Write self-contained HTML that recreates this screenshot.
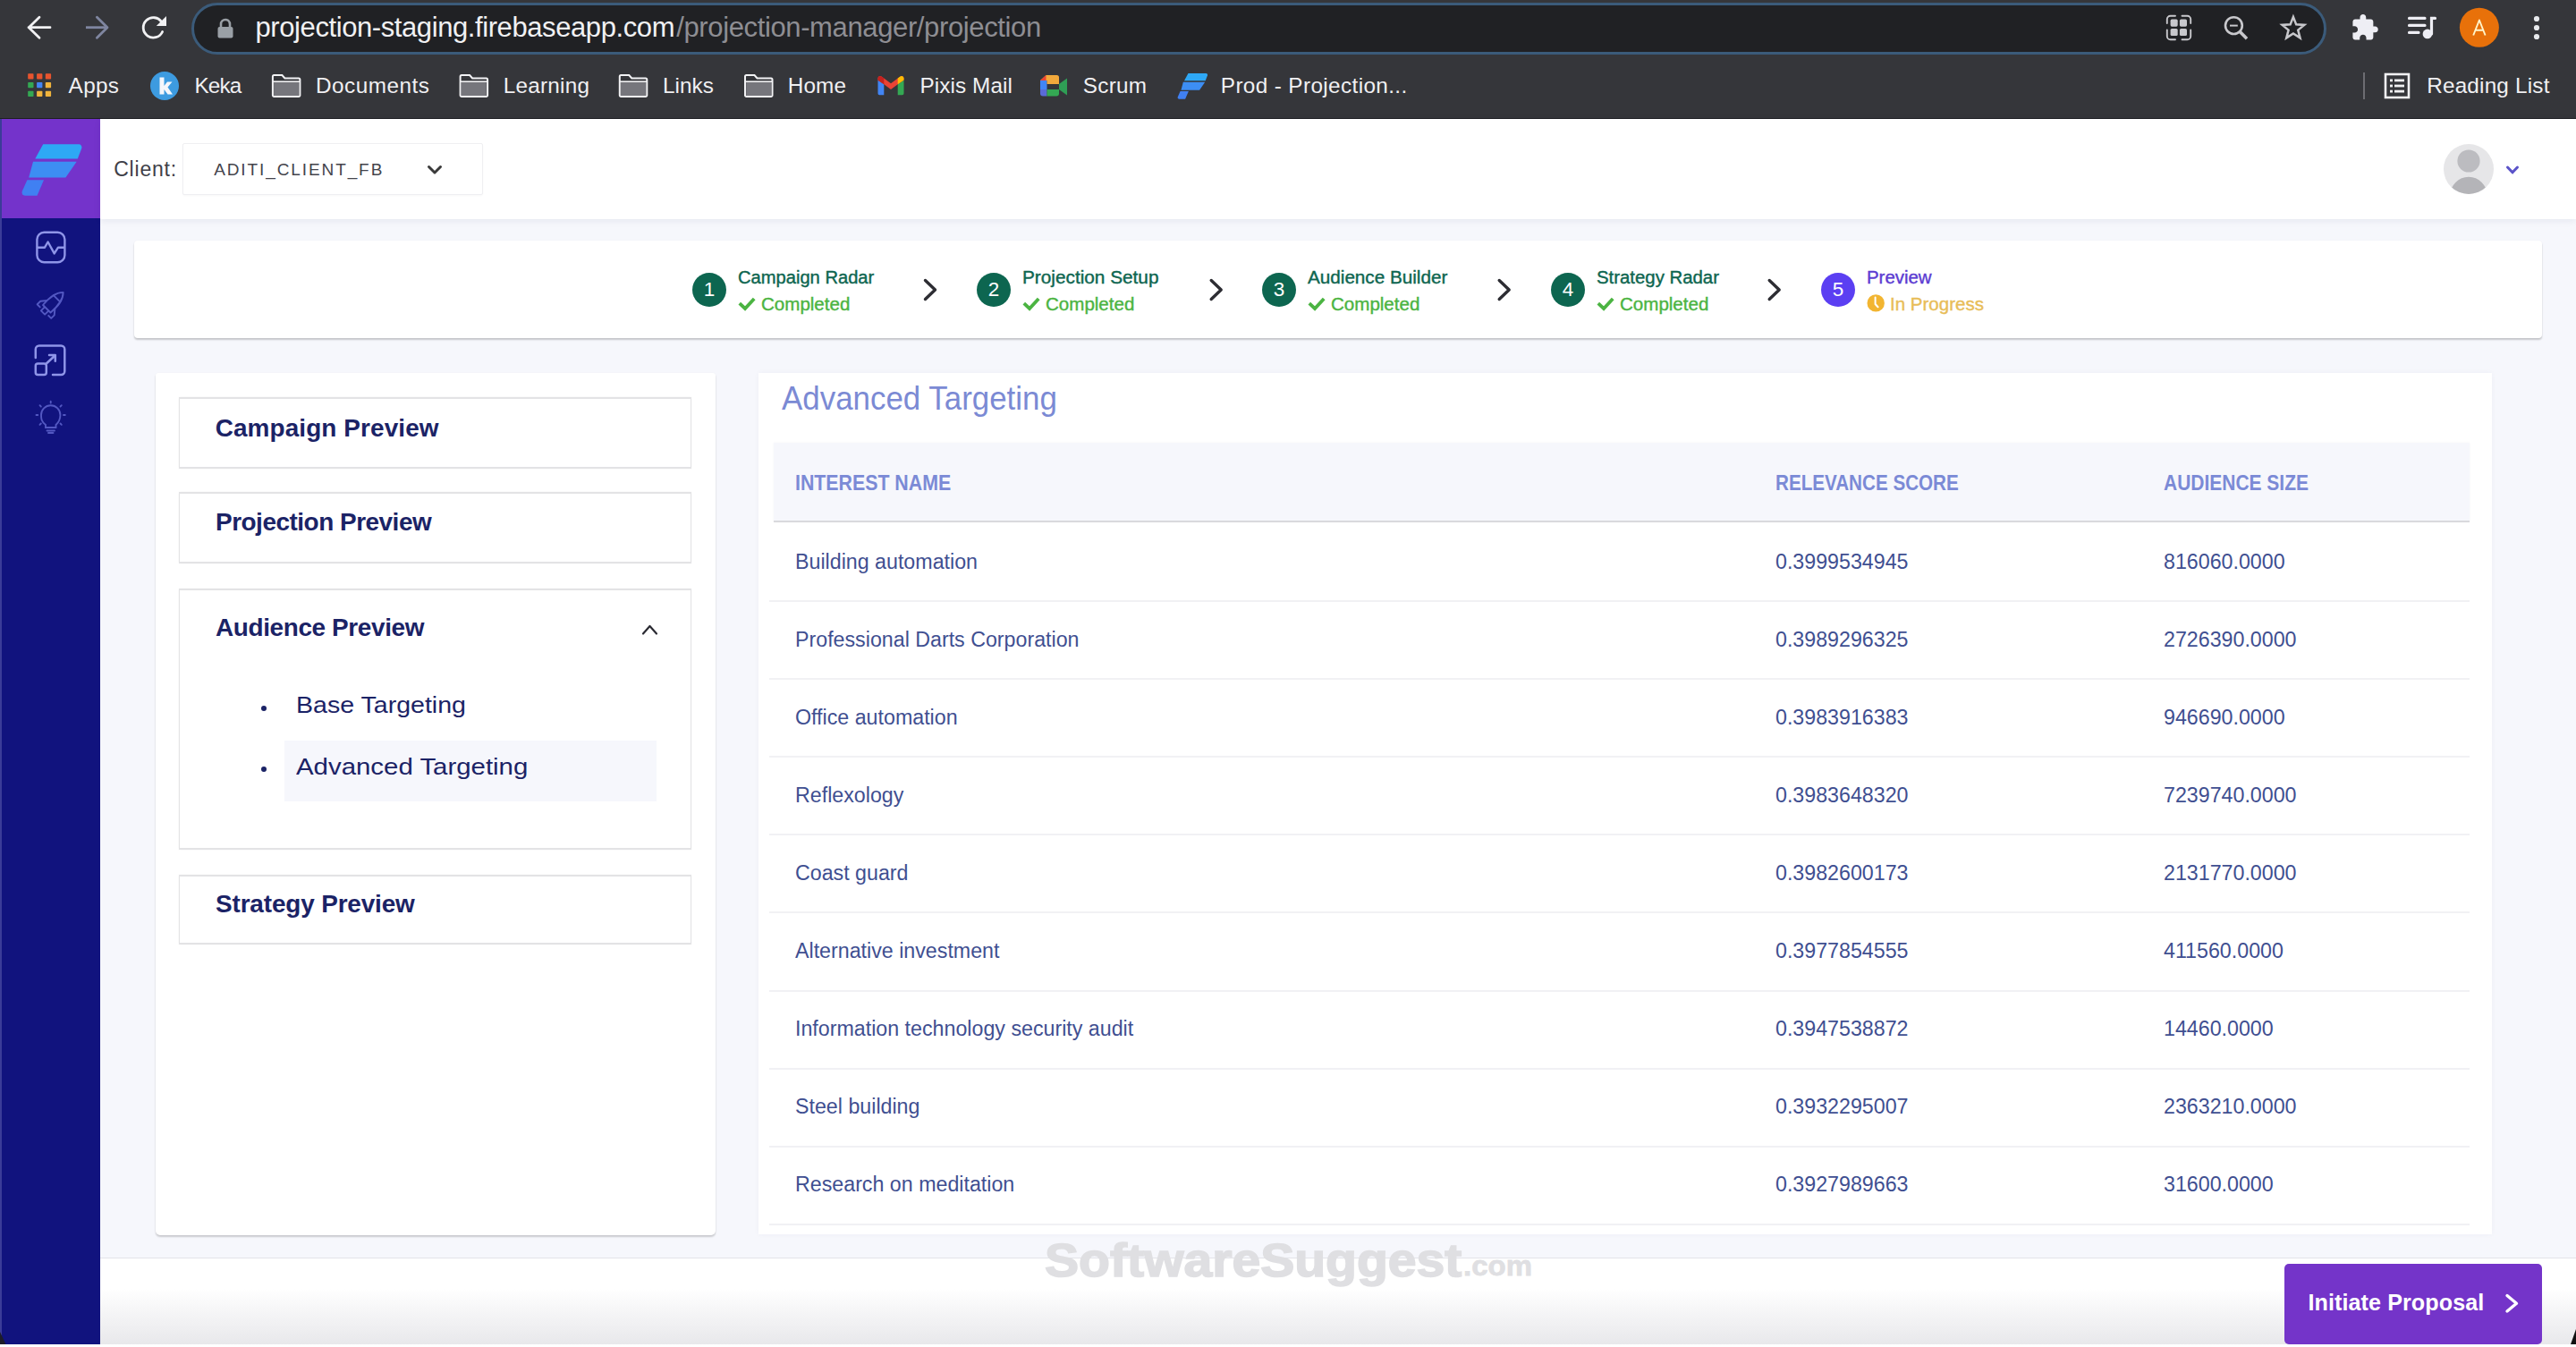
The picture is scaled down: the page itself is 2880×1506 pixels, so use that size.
<!DOCTYPE html>
<html><head><meta charset="utf-8">
<style>
*{box-sizing:border-box;margin:0;padding:0}
html,body{width:2880px;height:1506px;overflow:hidden;background:#f6f7fc;font-family:"Liberation Sans",sans-serif}
.a{position:absolute}
.t{position:absolute;white-space:nowrap;line-height:normal}
.m{-webkit-text-stroke:0.35px currentColor}
svg.o{position:absolute;left:0;top:0}
</style></head><body>
<div class="a" style="left:0;top:0;width:2880px;height:133px;background:#35363a"></div>
<div class="a" style="left:0;top:132px;width:2880px;height:1px;background:#1e1f22"></div>
<div class="a" style="left:214px;top:3px;width:2387px;height:58px;border-radius:29px;background:#202124;border:3px solid #3b5b7a"></div>
<div class="t" style="left:285.5px;top:13.0px;font-size:31.00px;font-weight:400;color:#f1f1f3;letter-spacing:-0.410px;">projection-staging.firebaseapp.com</div>
<div class="t" style="left:756.2px;top:13.0px;font-size:31.00px;font-weight:400;color:#8e8e93;letter-spacing:-0.370px;">/projection-manager/projection</div>
<div class="t" style="left:76.6px;top:81.8px;font-size:24.30px;font-weight:400;color:#f0f0f2;letter-spacing:0.331px;">Apps</div>
<div class="t" style="left:217.5px;top:81.8px;font-size:24.30px;font-weight:400;color:#f0f0f2;letter-spacing:-0.869px;">Keka</div>
<div class="t" style="left:353.0px;top:81.8px;font-size:24.30px;font-weight:400;color:#f0f0f2;letter-spacing:0.512px;">Documents</div>
<div class="t" style="left:562.8px;top:81.8px;font-size:24.30px;font-weight:400;color:#f0f0f2;letter-spacing:0.229px;">Learning</div>
<div class="t" style="left:741.0px;top:81.8px;font-size:24.30px;font-weight:400;color:#f0f0f2;letter-spacing:0.064px;">Links</div>
<div class="t" style="left:880.7px;top:81.8px;font-size:24.30px;font-weight:400;color:#f0f0f2;letter-spacing:0.158px;">Home</div>
<div class="t" style="left:1028.4px;top:81.8px;font-size:24.30px;font-weight:400;color:#f0f0f2;letter-spacing:0.110px;">Pixis Mail</div>
<div class="t" style="left:1210.8px;top:81.8px;font-size:24.30px;font-weight:400;color:#f0f0f2;letter-spacing:0.242px;">Scrum</div>
<div class="t" style="left:1364.8px;top:81.8px;font-size:24.30px;font-weight:400;color:#f0f0f2;letter-spacing:0.380px;">Prod - Projection...</div>
<div class="t" style="left:2713.2px;top:81.8px;font-size:24.30px;font-weight:400;color:#f0f0f2;letter-spacing:0.198px;">Reading List</div>
<div class="a" style="left:0;top:133px;width:112px;height:1370px;background:#11137e"></div>
<div class="a" style="left:0;top:133px;width:112px;height:111px;background:#7433cb"></div>
<div class="a" style="left:0;top:1503px;width:2880px;height:3px;background:#fff"></div>
<div class="a" style="left:0;top:133px;width:2px;height:1370px;background:#3b3c98"></div>
<div class="a" style="left:112px;top:133px;width:2768px;height:112px;background:#fff;box-shadow:0 2px 8px rgba(20,30,80,0.07)"></div>
<div class="a" style="left:204px;top:160px;width:336px;height:58px;background:#fff;border:1px solid #efeff2;border-radius:2px;box-shadow:0 1px 2px rgba(0,0,0,0.03)"></div>
<div class="t" style="left:127.2px;top:175.7px;font-size:23.04px;font-weight:400;color:#404048;letter-spacing:0.778px;">Client:</div>
<div class="t" style="left:239.2px;top:178.5px;font-size:18.99px;font-weight:400;color:#44444c;letter-spacing:1.907px;">ADITI_CLIENT_FB</div>
<div class="a" style="left:150px;top:269px;width:2692px;height:109px;background:#fff;border-radius:4px;box-shadow:0 2px 2px rgba(0,0,0,0.20),0 0 2px rgba(0,0,0,0.03)"></div>
<div class="a" style="left:774px;top:305px;width:38px;height:38px;border-radius:50%;background:#0d6650"></div>
<div class="t" style="left:774px;top:310.9px;width:38px;text-align:center;font-size:22.5px;color:#fff">1</div>
<div class="t" style="left:825.2px;top:298.8px;font-size:20.39px;font-weight:400;color:#0e6650;transform:scaleX(0.9886);transform-origin:0 0;-webkit-text-stroke:0.4px #0e6650">Campaign Radar</div>
<div class="t" style="left:851.3px;top:327.7px;font-size:20.67px;font-weight:400;color:#4bb442;transform:scaleX(0.9946);transform-origin:0 0;-webkit-text-stroke:0.4px #4bb442">Completed</div>
<div class="a" style="left:1092px;top:305px;width:38px;height:38px;border-radius:50%;background:#0d6650"></div>
<div class="t" style="left:1092px;top:310.9px;width:38px;text-align:center;font-size:22.5px;color:#fff">2</div>
<div class="t" style="left:1143.2px;top:298.8px;font-size:20.39px;font-weight:400;color:#0e6650;transform:scaleX(1.0199);transform-origin:0 0;-webkit-text-stroke:0.4px #0e6650">Projection Setup</div>
<div class="t" style="left:1169.3px;top:327.7px;font-size:20.67px;font-weight:400;color:#4bb442;transform:scaleX(0.9946);transform-origin:0 0;-webkit-text-stroke:0.4px #4bb442">Completed</div>
<div class="a" style="left:1411px;top:305px;width:38px;height:38px;border-radius:50%;background:#0d6650"></div>
<div class="t" style="left:1411px;top:310.9px;width:38px;text-align:center;font-size:22.5px;color:#fff">3</div>
<div class="t" style="left:1462.2px;top:298.8px;font-size:20.39px;font-weight:400;color:#0e6650;transform:scaleX(1.0146);transform-origin:0 0;-webkit-text-stroke:0.4px #0e6650">Audience Builder</div>
<div class="t" style="left:1488.3px;top:327.7px;font-size:20.67px;font-weight:400;color:#4bb442;transform:scaleX(0.9946);transform-origin:0 0;-webkit-text-stroke:0.4px #4bb442">Completed</div>
<div class="a" style="left:1734px;top:305px;width:38px;height:38px;border-radius:50%;background:#0d6650"></div>
<div class="t" style="left:1734px;top:310.9px;width:38px;text-align:center;font-size:22.5px;color:#fff">4</div>
<div class="t" style="left:1785.2px;top:298.8px;font-size:20.39px;font-weight:400;color:#0e6650;transform:scaleX(0.9991);transform-origin:0 0;-webkit-text-stroke:0.4px #0e6650">Strategy Radar</div>
<div class="t" style="left:1811.3px;top:327.7px;font-size:20.67px;font-weight:400;color:#4bb442;transform:scaleX(0.9946);transform-origin:0 0;-webkit-text-stroke:0.4px #4bb442">Completed</div>
<div class="a" style="left:2036px;top:305px;width:38px;height:38px;border-radius:50%;background:#5b3ff2"></div>
<div class="t" style="left:2036px;top:310.9px;width:38px;text-align:center;font-size:22.5px;color:#fff">5</div>
<div class="t" style="left:2087.2px;top:298.8px;font-size:20.39px;font-weight:400;color:#5c3cd2;transform:scaleX(1.0015);transform-origin:0 0;-webkit-text-stroke:0.4px #5c3cd2">Preview</div>
<div class="t" style="left:2113.3px;top:327.7px;font-size:20.67px;font-weight:400;color:#e8bd58;transform:scaleX(0.9936);transform-origin:0 0;-webkit-text-stroke:0.4px #e8bd58">In Progress</div>
<div class="a" style="left:174px;top:417px;width:626px;height:964px;background:#fff;border-radius:3px 3px 5px 5px;box-shadow:0 2px 2px rgba(0,0,0,0.18),0 0 2px rgba(0,0,0,0.03)"></div>
<div class="a" style="left:200px;top:444px;width:573px;height:80px;background:#fff;border-style:solid;border-color:#e3e3e5;border-width:2px 1.5px;box-shadow:0 0 2px rgba(0,0,0,0.05)"></div>
<div class="a" style="left:200px;top:550px;width:573px;height:80px;background:#fff;border-style:solid;border-color:#e3e3e5;border-width:2px 1.5px;box-shadow:0 0 2px rgba(0,0,0,0.05)"></div>
<div class="a" style="left:200px;top:658px;width:573px;height:292px;background:#fff;border-style:solid;border-color:#e3e3e5;border-width:2px 1.5px;box-shadow:0 0 2px rgba(0,0,0,0.05)"></div>
<div class="a" style="left:200px;top:978px;width:573px;height:78px;background:#fff;border-style:solid;border-color:#e3e3e5;border-width:2px 1.5px;box-shadow:0 0 2px rgba(0,0,0,0.05)"></div>
<div class="a" style="left:318px;top:828px;width:416px;height:68px;background:#f6f7fc"></div>
<div class="t" style="left:240.7px;top:463.0px;font-size:27.93px;font-weight:700;color:#1b2366;letter-spacing:0.102px;">Campaign Preview</div>
<div class="t" style="left:241.0px;top:568.4px;font-size:27.93px;font-weight:700;color:#1b2366;letter-spacing:-0.482px;">Projection Preview</div>
<div class="t" style="left:241.0px;top:686.2px;font-size:27.93px;font-weight:700;color:#1b2366;letter-spacing:-0.372px;">Audience Preview</div>
<div class="t" style="left:241.0px;top:995.0px;font-size:27.93px;font-weight:700;color:#1b2366;letter-spacing:-0.147px;">Strategy Preview</div>
<div class="t" style="left:331.0px;top:772.8px;font-size:26.26px;font-weight:400;color:#1b2366;transform:scaleX(1.0877);transform-origin:0 0;">Base Targeting</div>
<div class="t" style="left:331.0px;top:841.5px;font-size:26.26px;font-weight:400;color:#1b2366;transform:scaleX(1.1198);transform-origin:0 0;">Advanced Targeting</div>
<div class="a" style="left:292px;top:789px;width:6px;height:6px;border-radius:50%;background:#1b2366"></div>
<div class="a" style="left:292px;top:857px;width:6px;height:6px;border-radius:50%;background:#1b2366"></div>
<div class="a" style="left:848px;top:417px;width:1938px;height:963px;background:#fff;box-shadow:0 0 6px rgba(40,50,110,0.04)"></div>
<div class="t" style="left:873.8px;top:424.5px;font-size:36.31px;font-weight:400;color:#7b8ad4;transform:scaleX(0.9614);transform-origin:0 0;">Advanced Targeting</div>
<div class="a" style="left:865px;top:495px;width:1896px;height:89px;background:#f6f7fc;border-bottom:2px solid #d9d9dd;box-shadow:0 0 3px rgba(0,0,0,0.04)"></div>
<div class="t" style="left:889.4px;top:526.6px;font-size:23.74px;font-weight:700;color:#7b8ad6;transform:scaleX(0.8983);transform-origin:0 0;">INTEREST NAME</div>
<div class="t" style="left:1984.5px;top:526.8px;font-size:23.74px;font-weight:700;color:#7b8ad6;transform:scaleX(0.8689);transform-origin:0 0;">RELEVANCE SCORE</div>
<div class="t" style="left:2419.0px;top:526.8px;font-size:23.74px;font-weight:700;color:#7b8ad6;transform:scaleX(0.8835);transform-origin:0 0;">AUDIENCE SIZE</div>
<div class="t" style="left:889.0px;top:613.5px;font-size:24.02px;font-weight:400;color:#3f4f91;transform:scaleX(0.9670);transform-origin:0 0;">Building automation</div>
<div class="t" style="left:1984.5px;top:613.5px;font-size:24.02px;font-weight:400;color:#3f4f91;transform:scaleX(0.9670);transform-origin:0 0;">0.3999534945</div>
<div class="t" style="left:2419.0px;top:613.5px;font-size:24.02px;font-weight:400;color:#3f4f91;transform:scaleX(0.9670);transform-origin:0 0;">816060.0000</div>
<div class="a" style="left:860px;top:671.0px;width:1901px;height:2px;background:#f1f1f4"></div>
<div class="t" style="left:889.0px;top:700.6px;font-size:24.02px;font-weight:400;color:#3f4f91;transform:scaleX(0.9670);transform-origin:0 0;">Professional Darts Corporation</div>
<div class="t" style="left:1984.5px;top:700.6px;font-size:24.02px;font-weight:400;color:#3f4f91;transform:scaleX(0.9670);transform-origin:0 0;">0.3989296325</div>
<div class="t" style="left:2419.0px;top:700.6px;font-size:24.02px;font-weight:400;color:#3f4f91;transform:scaleX(0.9670);transform-origin:0 0;">2726390.0000</div>
<div class="a" style="left:860px;top:758.1px;width:1901px;height:2px;background:#f1f1f4"></div>
<div class="t" style="left:889.0px;top:787.7px;font-size:24.02px;font-weight:400;color:#3f4f91;transform:scaleX(0.9670);transform-origin:0 0;">Office automation</div>
<div class="t" style="left:1984.5px;top:787.7px;font-size:24.02px;font-weight:400;color:#3f4f91;transform:scaleX(0.9670);transform-origin:0 0;">0.3983916383</div>
<div class="t" style="left:2419.0px;top:787.7px;font-size:24.02px;font-weight:400;color:#3f4f91;transform:scaleX(0.9670);transform-origin:0 0;">946690.0000</div>
<div class="a" style="left:860px;top:845.2px;width:1901px;height:2px;background:#f1f1f4"></div>
<div class="t" style="left:889.0px;top:874.8px;font-size:24.02px;font-weight:400;color:#3f4f91;transform:scaleX(0.9670);transform-origin:0 0;">Reflexology</div>
<div class="t" style="left:1984.5px;top:874.8px;font-size:24.02px;font-weight:400;color:#3f4f91;transform:scaleX(0.9670);transform-origin:0 0;">0.3983648320</div>
<div class="t" style="left:2419.0px;top:874.8px;font-size:24.02px;font-weight:400;color:#3f4f91;transform:scaleX(0.9670);transform-origin:0 0;">7239740.0000</div>
<div class="a" style="left:860px;top:932.3px;width:1901px;height:2px;background:#f1f1f4"></div>
<div class="t" style="left:889.0px;top:961.9px;font-size:24.02px;font-weight:400;color:#3f4f91;transform:scaleX(0.9670);transform-origin:0 0;">Coast guard</div>
<div class="t" style="left:1984.5px;top:961.9px;font-size:24.02px;font-weight:400;color:#3f4f91;transform:scaleX(0.9670);transform-origin:0 0;">0.3982600173</div>
<div class="t" style="left:2419.0px;top:961.9px;font-size:24.02px;font-weight:400;color:#3f4f91;transform:scaleX(0.9670);transform-origin:0 0;">2131770.0000</div>
<div class="a" style="left:860px;top:1019.4px;width:1901px;height:2px;background:#f1f1f4"></div>
<div class="t" style="left:889.0px;top:1049.0px;font-size:24.02px;font-weight:400;color:#3f4f91;transform:scaleX(0.9670);transform-origin:0 0;">Alternative investment</div>
<div class="t" style="left:1984.5px;top:1049.0px;font-size:24.02px;font-weight:400;color:#3f4f91;transform:scaleX(0.9670);transform-origin:0 0;">0.3977854555</div>
<div class="t" style="left:2419.0px;top:1049.0px;font-size:24.02px;font-weight:400;color:#3f4f91;transform:scaleX(0.9670);transform-origin:0 0;">411560.0000</div>
<div class="a" style="left:860px;top:1106.5px;width:1901px;height:2px;background:#f1f1f4"></div>
<div class="t" style="left:889.0px;top:1136.1px;font-size:24.02px;font-weight:400;color:#3f4f91;transform:scaleX(0.9670);transform-origin:0 0;">Information technology security audit</div>
<div class="t" style="left:1984.5px;top:1136.1px;font-size:24.02px;font-weight:400;color:#3f4f91;transform:scaleX(0.9670);transform-origin:0 0;">0.3947538872</div>
<div class="t" style="left:2419.0px;top:1136.1px;font-size:24.02px;font-weight:400;color:#3f4f91;transform:scaleX(0.9670);transform-origin:0 0;">14460.0000</div>
<div class="a" style="left:860px;top:1193.6px;width:1901px;height:2px;background:#f1f1f4"></div>
<div class="t" style="left:889.0px;top:1223.2px;font-size:24.02px;font-weight:400;color:#3f4f91;transform:scaleX(0.9670);transform-origin:0 0;">Steel building</div>
<div class="t" style="left:1984.5px;top:1223.2px;font-size:24.02px;font-weight:400;color:#3f4f91;transform:scaleX(0.9670);transform-origin:0 0;">0.3932295007</div>
<div class="t" style="left:2419.0px;top:1223.2px;font-size:24.02px;font-weight:400;color:#3f4f91;transform:scaleX(0.9670);transform-origin:0 0;">2363210.0000</div>
<div class="a" style="left:860px;top:1280.7px;width:1901px;height:2px;background:#f1f1f4"></div>
<div class="t" style="left:889.0px;top:1310.3px;font-size:24.02px;font-weight:400;color:#3f4f91;transform:scaleX(0.9670);transform-origin:0 0;">Research on meditation</div>
<div class="t" style="left:1984.5px;top:1310.3px;font-size:24.02px;font-weight:400;color:#3f4f91;transform:scaleX(0.9670);transform-origin:0 0;">0.3927989663</div>
<div class="t" style="left:2419.0px;top:1310.3px;font-size:24.02px;font-weight:400;color:#3f4f91;transform:scaleX(0.9670);transform-origin:0 0;">31600.0000</div>
<div class="a" style="left:860px;top:1367.8px;width:1901px;height:2px;background:#f1f1f4"></div>
<div class="a" style="left:112px;top:1406px;width:2768px;height:97px;background:linear-gradient(#fff 0,#fff 35%,#e8e8eb 100%);border-top:1px solid #e2e3e8"></div>
<div class="t" style="left:1167.6px;top:1379.3px;font-size:51.68px;font-weight:700;color:#dfdfe2;transform:scaleX(1.1050);transform-origin:0 0;-webkit-text-stroke:1.6px #dfdfe2">SoftwareSuggest</div>
<div class="t" style="left:1636.0px;top:1397.3px;font-size:32.12px;font-weight:700;color:#dfdfe2;transform:scaleX(1.0266);transform-origin:0 0;-webkit-text-stroke:0.8px #dfdfe2">.com</div>
<div class="a" style="left:2554px;top:1413px;width:288px;height:90px;border-radius:5px;background:#7434c9"></div>
<div class="t" style="left:2580.4px;top:1442.0px;font-size:25.14px;font-weight:700;color:#fff;letter-spacing:0.088px;">Initiate Proposal</div>
<svg class="o" width="2880" height="1506" viewBox="0 0 2880 1506">
<g fill="none" stroke-linecap="round" stroke-linejoin="round">
 <!-- back -->
 <path d="M56 30.7H32 M44 19.2L32.2 30.7L44 42.2" stroke="#f1f1f3" stroke-width="2.8"/>
 <!-- forward -->
 <path d="M96 30.7H120" stroke="#7f86a0" stroke-width="2.8" stroke-linecap="butt"/><path d="M108.4 19.2L120 30.7L108.4 42.2" stroke="#7f86a0" stroke-width="2.8"/>
 <!-- reload -->
 <path d="M180.8 24.8 A11.2 11.2 0 1 0 181.6 35.5" stroke="#f1f1f3" stroke-width="2.8"/>
 <!-- chevrons stepper -->
 <path d="M1034.5 313.5L1045.5 324L1034.5 334.5" stroke="#2d2d33" stroke-width="3.4"/>
 <path d="M1354.2 313.5L1365.2 324L1354.2 334.5" stroke="#2d2d33" stroke-width="3.4"/>
 <path d="M1676.2 313.5L1687.2 324L1676.2 334.5" stroke="#2d2d33" stroke-width="3.4"/>
 <path d="M1978.2 313.5L1989.2 324L1978.2 334.5" stroke="#2d2d33" stroke-width="3.4"/>
 <!-- checks -->
 <path d="M826.8 339.2L833 345L843.2 334" stroke="#4bb442" stroke-width="3.8" stroke-linecap="butt" stroke-linejoin="miter"/>
 <path d="M1144.8 339.2L1151 345L1161.2 334" stroke="#4bb442" stroke-width="3.8" stroke-linecap="butt" stroke-linejoin="miter"/>
 <path d="M1463.8 339.2L1470 345L1480.2 334" stroke="#4bb442" stroke-width="3.8" stroke-linecap="butt" stroke-linejoin="miter"/>
 <path d="M1786.8 339.2L1793 345L1803.2 334" stroke="#4bb442" stroke-width="3.8" stroke-linecap="butt" stroke-linejoin="miter"/>
 <!-- header chevrons -->
 <path d="M479.5 186.5L486 193L492.5 186.5" stroke="#3a3a3a" stroke-width="3"/>
 <path d="M2803.5 187L2809 192.8L2814.5 187" stroke="#5b53c9" stroke-width="3"/>
 <!-- audience chevron up -->
 <path d="M719 708.5L726.5 700L734 708.5" stroke="#2b2b33" stroke-width="2.2"/>
 <!-- button chevron -->
 <path d="M2803 1448.5L2813.5 1457.3L2803 1466" stroke="#fff" stroke-width="3.4"/>
</g>
<!-- reload arrowhead -->
<path d="M186 17.9V29.1H174.8Z" fill="#f1f1f3"/>
<!-- clock -->
<circle cx="2097.2" cy="338.9" r="9.7" fill="#f2b531"/>
<path d="M2096.6 332.5V340L2099.6 343.2" stroke="#fff" stroke-width="2" fill="none" stroke-linecap="round"/>
<rect x="243.5" y="30" width="17" height="12.5" rx="2" fill="#9aa0a6"/>
<path d="M247 31V27a5 5 0 0 1 10 0V31" fill="none" stroke="#9aa0a6" stroke-width="2.6"/>
<g fill="none" stroke="#c8c8cc" stroke-width="1.9" stroke-linecap="round"><path d="M2422.8 26V21.5a3.8 3.8 0 0 1 3.8-3.8H2432"/><path d="M2439.5 17.7H2445.4a3.8 3.8 0 0 1 3.8 3.8V26"/><path d="M2449.2 33.5V40.4a3.8 3.8 0 0 1-3.8 3.8H2439.5"/><path d="M2432 44.2H2426.6a3.8 3.8 0 0 1-3.8-3.8V33.5"/></g>
<rect x="2426.6" y="21.6" width="8.1" height="8.1" rx="1.6" fill="#c8c8cc"/>
<rect x="2426.6" y="31.9" width="8.1" height="8.1" rx="1.6" fill="#c8c8cc"/>
<rect x="2436.9" y="21.6" width="8.1" height="8.1" rx="1.6" fill="#c8c8cc"/>
<rect x="2436.9" y="31.9" width="8.1" height="8.1" rx="1.6" fill="#c8c8cc"/>
<circle cx="2497.4" cy="28.6" r="9.4" fill="none" stroke="#c8c8cc" stroke-width="2.6"/>
<path d="M2493 28.6H2501.8" stroke="#c8c8cc" stroke-width="2"/>
<path d="M2504.3 35.6L2512 43.3" stroke="#c8c8cc" stroke-width="3.6"/>
<polygon points="2563.90,18.90 2567.19,27.37 2576.26,27.88 2569.23,33.63 2571.54,42.42 2563.90,37.50 2556.26,42.42 2558.57,33.63 2551.54,27.88 2560.61,27.37" fill="none" stroke="#c8c8cc" stroke-width="2.5" stroke-linejoin="miter"/>
<path transform="translate(2627.7 14.75) scale(1.35)" fill="#eeeef4" d="M20.5 11H19V7c0-1.1-.9-2-2-2h-4V3.5C13 2.12 11.88 1 10.5 1S8 2.12 8 3.5V5H4c-1.1 0-1.99.9-1.99 2v3.8H3.5c1.49 0 2.7 1.21 2.7 2.7s-1.21 2.7-2.7 2.7H2V20c0 1.1.9 2 2 2h3.8v-1.5c0-1.49 1.21-2.7 2.7-2.7 1.49 0 2.7 1.21 2.7 2.7V22H17c1.1 0 2-.9 2-2v-4h1.5c1.38 0 2.5-1.12 2.5-2.5S21.88 11 20.5 11z"/>
<g stroke="#eeeef4" stroke-width="3.2" stroke-linecap="round" fill="none"><path d="M2693.5 20.4H2711 M2693.5 28.4H2711 M2693.5 36.4H2704 M2718.5 38V20.4H2722.5"/></g>
<circle cx="2713.9" cy="37.9" r="5.3" fill="#eeeef4"/>
<circle cx="2771.9" cy="30.8" r="22" fill="#e8710a"/>
<path d="M2765.2 39.5L2771.9 22.5L2778.6 39.5M2767.6 33.8H2776.2" fill="none" stroke="#fff6cc" stroke-width="1.9" stroke-linejoin="round"/>
<circle cx="2836" cy="21" r="3.1" fill="#e8eaed"/>
<circle cx="2836" cy="31" r="3.1" fill="#e8eaed"/>
<circle cx="2836" cy="41" r="3.1" fill="#e8eaed"/>
<rect x="31.2" y="82.2" width="6.3" height="6.3" rx="0.8" fill="#e8542e"/>
<rect x="41.1" y="82.2" width="6.3" height="6.3" rx="0.8" fill="#e8542e"/>
<rect x="50.8" y="82.2" width="6.3" height="6.3" rx="0.8" fill="#e8542e"/>
<rect x="31.2" y="92" width="6.3" height="6.3" rx="0.8" fill="#34a853"/>
<rect x="41.1" y="92" width="6.3" height="6.3" rx="0.8" fill="#4285f4"/>
<rect x="50.8" y="92" width="6.3" height="6.3" rx="0.8" fill="#f0b43c"/>
<rect x="31.2" y="101.8" width="6.3" height="6.3" rx="0.8" fill="#34a853"/>
<rect x="41.1" y="101.8" width="6.3" height="6.3" rx="0.8" fill="#f0b43c"/>
<rect x="50.8" y="101.8" width="6.3" height="6.3" rx="0.8" fill="#f0b43c"/>
<circle cx="184" cy="96" r="16" fill="#3d9be0"/>
<path d="M178.5 86.5V105.5H183.5V100L187.5 105.5H193L187.5 97.5L192.5 91.5H187L183.5 96V86.5Z" fill="#f4f6fb"/>
<g transform="translate(303.9 83)"><path d="M1 2.5a1.5 1.5 0 0 1 1.5-1.5H11.5L14.5 4.5H30a1.5 1.5 0 0 1 1.5 1.5V23.5a1.5 1.5 0 0 1-1.5 1.5H2.5A1.5 1.5 0 0 1 1 23.5Z" fill="none" stroke="#f2f2f4" stroke-width="2"/><rect x="2.2" y="9" width="28" height="15" fill="#76767c"/><path d="M1 8.2H31.5" stroke="#f2f2f4" stroke-width="1.6"/></g>
<g transform="translate(513.6 83)"><path d="M1 2.5a1.5 1.5 0 0 1 1.5-1.5H11.5L14.5 4.5H30a1.5 1.5 0 0 1 1.5 1.5V23.5a1.5 1.5 0 0 1-1.5 1.5H2.5A1.5 1.5 0 0 1 1 23.5Z" fill="none" stroke="#f2f2f4" stroke-width="2"/><rect x="2.2" y="9" width="28" height="15" fill="#76767c"/><path d="M1 8.2H31.5" stroke="#f2f2f4" stroke-width="1.6"/></g>
<g transform="translate(691.8 83)"><path d="M1 2.5a1.5 1.5 0 0 1 1.5-1.5H11.5L14.5 4.5H30a1.5 1.5 0 0 1 1.5 1.5V23.5a1.5 1.5 0 0 1-1.5 1.5H2.5A1.5 1.5 0 0 1 1 23.5Z" fill="none" stroke="#f2f2f4" stroke-width="2"/><rect x="2.2" y="9" width="28" height="15" fill="#76767c"/><path d="M1 8.2H31.5" stroke="#f2f2f4" stroke-width="1.6"/></g>
<g transform="translate(832 83)"><path d="M1 2.5a1.5 1.5 0 0 1 1.5-1.5H11.5L14.5 4.5H30a1.5 1.5 0 0 1 1.5 1.5V23.5a1.5 1.5 0 0 1-1.5 1.5H2.5A1.5 1.5 0 0 1 1 23.5Z" fill="none" stroke="#f2f2f4" stroke-width="2"/><rect x="2.2" y="9" width="28" height="15" fill="#76767c"/><path d="M1 8.2H31.5" stroke="#f2f2f4" stroke-width="1.6"/></g>
<g transform="translate(981.5 85)"><path d="M0 4.5V19.5a1.8 1.8 0 0 0 1.8 1.8H6.8V9.2Z" fill="#4285f4"/><path d="M22.2 9.2V21.3H27.2a1.8 1.8 0 0 0 1.8-1.8V4.5Z" fill="#34a853"/><path d="M0 4.5L6.8 9.2L14.5 15L22.2 9.2L29 4.5V2.5a2.5 2.5 0 0 0-4-2L14.5 8.3L4 0.5a2.5 2.5 0 0 0-4 2Z" fill="#ea4335"/><path d="M22.2 9.2L29 4.5V2.5a2.5 2.5 0 0 0-4-2L22.2 2.5Z" fill="#fbbc04"/><path d="M0 4.5L6.8 9.2V2.5L4 0.5a2.5 2.5 0 0 0-4 2Z" fill="#c5221f"/></g>
<g transform="translate(1163 84)"><path d="M0 6H7.5V16H0Z" fill="#4285f4"/><path d="M0 16H7.5V23.5H3a3 3 0 0 1-3-3Z" fill="#5a6bd8"/><path d="M7.5 6L0 6L6.5 0H18.5a2.5 2.5 0 0 1 2.5 2.5V10H7.5Z" fill="#f2a93b"/><path d="M7.5 16H21V20.5a3 3 0 0 1-3 3H7.5Z" fill="#34a853"/><path d="M21 10V16L30 22.5V3.5Z" fill="#2f9e55"/><path d="M0 6L6.5 0V6Z" fill="#ea4335"/></g>
<g transform="translate(1304.35 1.4) scale(0.5)"><path d="M48.2 161.2H88a3.5 3.5 0 0 1 3.3 4.6L86.8 177.5H39.3Z" fill="#2ea8f5"/><path d="M37 180.8H85.7L73.4 198.6H32.2Z" fill="#3d8ef3"/><path d="M30.4 201.2H49L41.5 218.7H28a3.5 3.5 0 0 1-3.3-4.6Z" fill="#4080f2"/></g>
<rect x="2642" y="81" width="2" height="30" fill="#6d6d72"/>
<rect x="2667" y="83" width="26" height="26" fill="none" stroke="#f1f1f3" stroke-width="2.6"/>
<g fill="#f1f1f3"><rect x="2672" y="88.5" width="3" height="2.8"/><rect x="2677" y="88.5" width="11" height="2.8"/><rect x="2672" y="94.6" width="3" height="2.8"/><rect x="2677" y="94.6" width="11" height="2.8"/><rect x="2672" y="100.7" width="3" height="2.8"/><rect x="2677" y="100.7" width="11" height="2.8"/></g>
<path d="M48.2 161.2H88a3.5 3.5 0 0 1 3.3 4.6L86.8 177.5H39.3Z" fill="#2ea8f5"/>
<path d="M37 180.8H85.7L73.4 198.6H32.2Z" fill="#3d8ef3"/>
<path d="M30.4 201.2H49L41.5 218.7H28a3.5 3.5 0 0 1-3.3-4.6Z" fill="#4080f2"/>
<rect x="41.4" y="259.7" width="31" height="33.6" rx="8" fill="none" stroke="#8f95e8" stroke-width="2.4"/>
<path d="M41.4 276.7H50L53.6 270.5L60.7 283.4L65 276.7H72.4" fill="none" stroke="#8f95e8" stroke-width="2.4" stroke-linejoin="round"/>
<g transform="translate(56.5 341) rotate(45)" fill="none" stroke="#5358c2" stroke-width="1.9" stroke-linejoin="round"><path d="M0 -20C6 -14 7 -6 6 6H-6C-7 -6 -6 -14 0 -20Z"/><path d="M-6 -1L-11 5V10H-6 M6 -1L11 5V10H6"/><path d="M-3 6V12H3V6"/><path d="M-6 -10H6"/></g>
<g fill="none" stroke="#8f95e8" stroke-width="2.5" stroke-linecap="round" stroke-linejoin="round"><path d="M39.8 400V390.5a4 4 0 0 1 4-4H68.3a4 4 0 0 1 4 4V415a4 4 0 0 1-4 4H59"/><rect x="39.8" y="406.5" width="12" height="12.5" rx="2.5"/><path d="M51.8 406.5L61.5 397.5 M55 397H61.8V403.8"/></g>
<g fill="none" stroke="#5358c2" stroke-width="1.9" stroke-linecap="round"><path d="M51 475C46 471 46 468 46 464a10.7 10.7 0 0 1 21.4 0C67.4 468 67 471 62.5 475V478H51Z"/><path d="M52.5 481.5H61 M54 484H59.5"/><path d="M56.7 448.8V450.5 M44.5 453.2L45.8 454.5 M68.8 453.2L67.5 454.5 M40.5 464H42.3 M71 464H72.8 M44.5 474.8L45.8 473.5 M68.8 474.8L67.5 473.5"/></g>
<defs><clipPath id="av"><circle cx="2760" cy="189" r="28"/></clipPath></defs>
<circle cx="2760" cy="189" r="28" fill="#e6e6e8"/>
<g clip-path="url(#av)"><circle cx="2760" cy="180" r="12.6" fill="#bcbcc0"/><ellipse cx="2760" cy="219" rx="21.5" ry="22" fill="#b4b4b8" stroke="#e6e6e8" stroke-width="1.5"/></g>
<path d="M2874 1503L2880 1486V1503Z" fill="#111"/>
<path d="M0 1489L6.5 1503H0Z" fill="#1d1d2a"/>
</svg>
</body></html>
